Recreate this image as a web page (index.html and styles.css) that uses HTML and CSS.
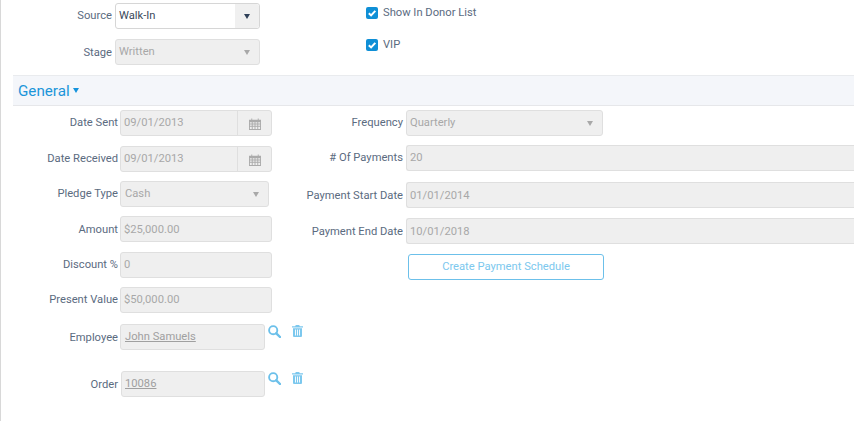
FILE: index.html
```html
<!DOCTYPE html>
<html lang="en">
<head>
<meta charset="utf-8">
<title>Pledge</title>
<link rel="stylesheet" href="styles.css">
</head>
<body>
<svg class="defs" width="0" height="0" aria-hidden="true">
  <symbol id="cal" viewBox="0 0 13 13"><path fill="#ababab" d="M0 2h2.500V0.500h1V2h6V0.500h1V2H13v11H0zM1 4.500V6h2V4.500zm3 0V6h2V4.500zm3 0V6h2V4.500zm3 0V6h2V4.500zM1 7v1.500h2V7zm3 0v1.500h2V7zm3 0v1.500h2V7zm3 0v1.500h2V7zM1 9.500V12h2V9.500zm3 0V12h2V9.500zm3 0V12h2V9.500zm3 0V12h2V9.500z" fill-rule="evenodd"/></symbol>
  <symbol id="search" viewBox="0 0 13 13"><circle cx="5.200" cy="5.200" r="4.100" fill="none" stroke="#6cc0ea" stroke-width="1.900"/><path d="M8.300 8.300l3.700 3.700" stroke="#6cc0ea" stroke-width="2.400" stroke-linecap="round"/></symbol>
  <symbol id="trash" viewBox="0 0 11 12"><path fill="#7cc8ee" fill-rule="evenodd" d="M3.800 0h3.400l.6 1.300H11v1.200H0V1.300h3.200zM1 3.200h9V11a1 1 0 0 1-1 1H2a1 1 0 0 1-1-1zM3 4.500v6h.9v-6zm2.050 0v6h.9v-6zm2.050 0v6H8v-6z"/></symbol>
  <symbol id="tick" viewBox="0 0 12 12"><path d="M2.800 6.200l2.300 2.200 4.200-4.500" fill="none" stroke="#fff" stroke-width="2"/></symbol>
</svg>
<main class="page">
  <section class="top">
    <div class="top-left">
      <div class="row">
        <span class="label w-top">Source</span>
        <div class="field w-145 active"><span class="value">Walk-In</span><span class="addon addon-select"><i class="caret dark"></i></span></div>
      </div>
      <div class="row mt-10">
        <span class="label w-top low">Stage</span>
        <div class="field w-145"><span class="value">Written</span><span class="addon addon-select"><i class="caret"></i></span></div>
      </div>
    </div>
    <div class="top-right">
      <label class="check"><span class="box"><svg width="12" height="12"><use href="#tick"/></svg></span>Show In Donor List</label>
      <label class="check check-vip"><span class="box"><svg width="12" height="12"><use href="#tick"/></svg></span>VIP</label>
    </div>
  </section>

  <header class="section-head"><h2>General</h2><i class="caret blue"></i></header>

  <section class="cols">
    <div class="col-left">
      <div class="row">
        <span class="label w-l">Date Sent</span>
        <div class="field w-152"><span class="value">09/01/2013</span><span class="addon addon-cal"><svg width="12" height="12"><use href="#cal"/></svg></span></div>
      </div>
      <div class="row mt-10">
        <span class="label w-l">Date Received</span>
        <div class="field w-152"><span class="value">09/01/2013</span><span class="addon addon-cal"><svg width="12" height="12"><use href="#cal"/></svg></span></div>
      </div>
      <div class="row mt-9">
        <span class="label w-l">Pledge Type</span>
        <div class="field w-149"><span class="value pad-4">Cash</span><span class="addon addon-select"><i class="caret"></i></span></div>
      </div>
      <div class="row mt-9">
        <span class="label w-l low">Amount</span>
        <div class="field w-152"><span class="value low-value">$25,000.00</span></div>
      </div>
      <div class="row mt-10">
        <span class="label w-l">Discount %</span>
        <div class="field w-152"><span class="value">0</span></div>
      </div>
      <div class="row mt-9">
        <span class="label w-l">Present Value</span>
        <div class="field w-152"><span class="value">$50,000.00</span></div>
      </div>
      <div class="row mt-11">
        <span class="label w-l low">Employee</span>
        <div class="field w-145"><a class="value link">John Samuels</a></div>
        <span class="tools"><svg width="13" height="13"><use href="#search"/></svg><svg width="11" height="12"><use href="#trash"/></svg></span>
      </div>
      <div class="row mt-21">
        <span class="label w-l low">Order</span>
        <div class="field w-144 shift-1"><a class="value link tight">10086</a></div>
        <span class="tools"><svg width="13" height="13"><use href="#search"/></svg><svg width="11" height="12"><use href="#trash"/></svg></span>
      </div>
    </div>
    <div class="col-right">
      <div class="row">
        <span class="label w-r">Frequency</span>
        <div class="field w-197"><span class="value">Quarterly</span><span class="addon addon-select"><i class="caret"></i></span></div>
      </div>
      <div class="row mt-9">
        <span class="label w-r"># Of Payments</span>
        <div class="field grow square"><span class="value">20</span></div>
      </div>
      <div class="row mt-11">
        <span class="label w-r low">Payment Start Date</span>
        <div class="field grow square"><span class="value low-value">01/01/2014</span></div>
      </div>
      <div class="row mt-10">
        <span class="label w-r low">Payment End Date</span>
        <div class="field grow square"><span class="value low-value">10/01/2018</span></div>
      </div>
      <button class="btn" type="button">Create Payment Schedule</button>
    </div>
  </section>
</main>
</body>
</html>
```
FILE: styles.css
```css
* { box-sizing: border-box; }
html, body { margin: 0; height: 100%; background: #fff; overflow: hidden; }
body { font: 11.200px/16px Roboto, "Liberation Sans", sans-serif; color: #5b6b7f; }
.defs { position: absolute; }
.page { width: 854px; height: 421px; border-left: 1px solid #d8d8d8; padding: 3px 0 0 1px; overflow: hidden; }

.top { display: flex; height: 62px; }
.top-left { width: 364px; flex: none; }
.top-right { padding-top: 2px; }
.check { display: flex; align-items: center; gap: 5px; height: 16px; color: #5b6b7f; }
.check-vip { margin-top: 16px; }
.box { width: 12px; height: 12px; border-radius: 2px; background: #0f8fd6; display: block; }
.box svg { display: block; }

.row { display: flex; align-items: center; height: 26px; }
.label { flex: none; text-align: right; white-space: nowrap; padding: 0 2px 0 0; }
.label.low { padding-top: 2px; }
.w-top { width: 113px; padding-right: 3px; }
.w-l { width: 118px; }
.w-r { width: 118px; padding-right: 3px; }

.field { flex: none; display: flex; align-items: stretch; height: 26px; background: #efefef; border: 1px solid #dfdfdf; border-radius: 3px; color: #a8a8a8; }
.field.active { background: #fff; color: #3b4a5c; border-color: #d6d6d6; }
.value { flex: 1; padding-left: 3px; line-height: 23px; white-space: nowrap; }
.low-value { line-height: 25px; }
.pad-4 { padding-left: 4px; }
.link { text-decoration: underline; color: #a0a0a0; padding-left: 4px; }
.tight { padding-left: 3px; }
.addon { display: flex; align-items: center; justify-content: center; flex: none; }
.addon-select { width: 24px; }
.active .addon-select { background: #f0f0f0; border-radius: 0 3px 3px 0; }
.addon-cal { width: 34px; border-left: 1px solid #dfdfdf; }
.addon-cal svg { display: block; margin-top: 1px; }
.caret { width: 0; height: 0; border-left: 3.500px solid transparent; border-right: 3.500px solid transparent; border-top: 5px solid #a8a8a8; display: block; }
.caret.dark { border-top-color: #2f4058; }
.caret.blue { border-top-color: #1593dc; margin: 0 0 1px 3px; }

.w-145 { width: 145px; }
.w-144 { width: 144px; }
.w-149 { width: 149px; }
.w-152 { width: 152px; }
.w-197 { width: 197px; }
.grow { flex: 1 0 auto; width: 460px; }
.square { border-right: 0; border-radius: 3px 0 0 3px; }
.shift-1 { margin-left: 1px; }

.mt-9 { margin-top: 9px; }
.mt-10 { margin-top: 10px; }
.mt-11 { margin-top: 11px; }
.mt-21 { margin-top: 21px; }

.section-head { display: flex; align-items: center; height: 31px; margin: 10px 0 4px 11px; padding-left: 5px; background: #f4f6fa; border-top: 1px solid #e9ebee; border-bottom: 1px solid #e6e7ea; }
.section-head h2 { margin: 0; font-size: 15.200px; font-weight: 400; color: #1b95d9; }

.cols { display: flex; }
.col-left { width: 286px; flex: none; }
.col-right { flex: none; width: 566px; }

.tools { display: flex; gap: 11px; align-self: flex-start; margin-left: 3px; padding-top: 1px; }
.tools svg { display: block; }

.btn { display: block; width: 196px; height: 26px; margin: 10px 0 0 120px; padding: 0; background: #fff; border: 1px solid #6cc0ea; border-radius: 3px; font: inherit; color: #7cc8ee; }
```
